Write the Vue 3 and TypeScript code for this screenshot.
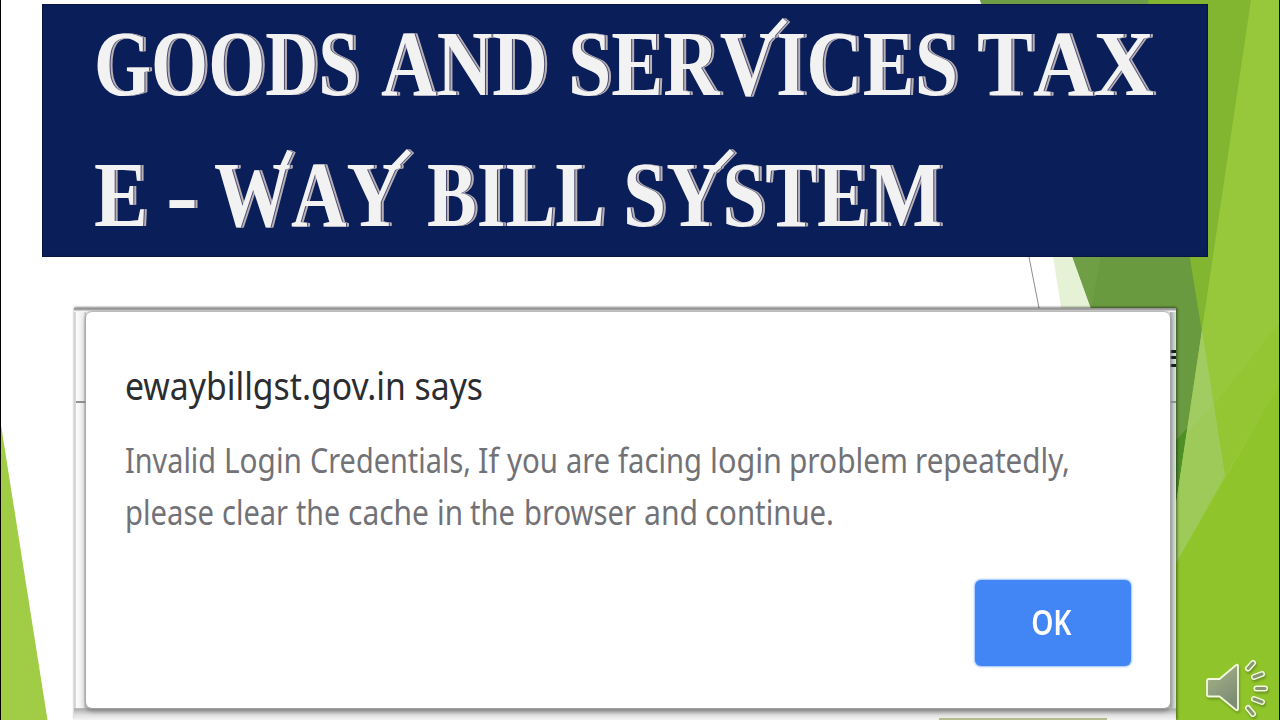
<script setup lang="ts">
interface Word {
  text: string
  x: number
  width: number
}

interface Line {
  baseline: number
  words: Word[]
}

const banner: Line[] = [
  {
    baseline: 91,
    words: [
      { text: 'GOODS', x: 52, width: 265 },
      { text: 'AND', x: 339, width: 167 },
      { text: 'SERVICES', x: 526, width: 390 },
      { text: 'TAX', x: 935, width: 177 },
    ],
  },
  {
    baseline: 222,
    words: [
      { text: 'E', x: 52, width: 54 },
      { text: '-', x: 124, width: 32 },
      { text: 'WAY', x: 172, width: 188 },
      { text: 'BILL', x: 385, width: 178 },
      { text: 'SYSTEM', x: 581, width: 319 },
    ],
  },
]

const swashes = ['M725 36 L743 16', 'M239 167 L248 147', 'M348 167 L367 147', 'M671 167 L690 147']

const message: Line[] = [
  {
    baseline: 36,
    words: [
      { text: 'Invalid', x: 0, width: 91 },
      { text: 'Login', x: 99, width: 78 },
      { text: 'Credentials,', x: 185, width: 161 },
      { text: 'If', x: 353, width: 21 },
      { text: 'you', x: 382, width: 51 },
      { text: 'are', x: 441, width: 44 },
      { text: 'facing', x: 493, width: 84 },
      { text: 'login', x: 585, width: 72 },
      { text: 'problem', x: 664, width: 119 },
      { text: 'repeatedly,', x: 790, width: 155 },
    ],
  },
  {
    baseline: 88,
    words: [
      { text: 'please', x: 0, width: 89 },
      { text: 'clear', x: 97, width: 66 },
      { text: 'the', x: 171, width: 44 },
      { text: 'cache', x: 223, width: 81 },
      { text: 'in', x: 312, width: 26 },
      { text: 'the', x: 345, width: 45 },
      { text: 'browser', x: 399, width: 112 },
      { text: 'and', x: 519, width: 54 },
      { text: 'continue.', x: 580, width: 129 },
    ],
  },
]
</script>

<template>
  <main class="slide">
    <svg class="backdrop" viewBox="0 0 1280 720" aria-hidden="true">
      <polygon points="1,425 47.5,720 1,720" fill="#a0cc46" />
      <path d="M1029 257 L1039 308" stroke="#8c8c8c" stroke-width="1" fill="none" />
      <polygon points="1012,0 1280,0 1280,720 1127,720" fill="#e6f2d5" />
      <polygon points="980,0 1280,0 1280,720 1239,720" fill="#6a9a40" />
      <polygon points="980,0 1150,0 1091,308" fill="#6f9e46" />
      <polygon points="1175,441 1200,415 1200,520 1175,520" fill="#4f8f27" />
      <polygon points="1148,0 1280,0 1280,720 1265,720" fill="#82b530" />
      <polygon points="1251,0 1280,0 1280,720 1144,720" fill="#97c83b" />
      <polygon points="1202,330 1225,475 1175,565 1175,511" fill="#a1cc62" />
      <polygon points="1187,433 1213,405 1225,475 1175,565 1175,511" fill="#9dca59" />
      <polygon points="1280,322 1214,405 1225,475 1280,385" fill="#93c632" />
      <polygon points="1280,384 1175,565 1175,720 1280,720" fill="#8fc42a" />
      <rect width="1" height="720" fill="#000" />
      <rect x="1279" width="1" height="720" fill="#071006" />
    </svg>

    <header class="banner">
      <svg class="banner-text" viewBox="0 0 1166 253" role="heading">
        <path v-for="d in swashes" :key="d" :d="d" class="swash" />
        <text v-for="line in banner" :key="line.baseline" :y="line.baseline">
          <tspan
            v-for="word in line.words"
            :key="word.x"
            :x="word.x"
            :textLength="word.width"
            lengthAdjust="spacingAndGlyphs"
          >{{ word.text }}</tspan>
        </text>
      </svg>
    </header>

    <section class="frame">
      <div class="gutter"></div>
      <div class="dialog">
        <svg class="origin" viewBox="0 0 1000 56">
          <text x="0" y="44" textLength="358" lengthAdjust="spacingAndGlyphs">ewaybillgst.gov.in says</text>
        </svg>
        <svg class="message" viewBox="0 0 1000 110">
          <text v-for="line in message" :key="line.baseline" :y="line.baseline">
            <tspan
              v-for="word in line.words"
              :key="word.x"
              :x="word.x"
              :textLength="word.width"
              lengthAdjust="spacingAndGlyphs"
            >{{ word.text }}</tspan>
          </text>
        </svg>
        <button class="ok" type="button"><span>OK</span></button>
      </div>
      <div class="gutter right">
        <i class="bar"></i>
        <i class="bar"></i>
        <i class="bar last"></i>
      </div>
    </section>

    <svg class="speaker" viewBox="0 0 66 64" aria-label="Sound">
      <defs>
        <linearGradient id="cone" x1="0" y1="0" x2="0.5" y2="1">
          <stop offset="0" stop-color="#aab68b" />
          <stop offset="1" stop-color="#7c8c73" />
        </linearGradient>
      </defs>
      <path d="M5 22 H15.500 L31.500 8.500 Q34 6.500 34 9 V52 Q34 54.500 31.500 52.500 L15.500 39.500 H5 Q3 39.500 3 37.500 V24 Q3 22 5 22 Z" fill="url(#cone)" stroke="#f3fadf" stroke-width="1.800" />
      <g class="waves outline">
        <path d="M44 11.500 L49 6" />
        <path d="M50 20 L58 17" />
        <path d="M52.500 31.500 H61" />
        <path d="M50 42 L58 45" />
        <path d="M44 51 L49 57" />
      </g>
      <g class="waves core">
        <path d="M44 11.500 L49 6" />
        <path d="M50 20 L58 17" />
        <path d="M52.500 31.500 H61" />
        <path d="M50 42 L58 45" />
        <path d="M44 51 L49 57" />
      </g>
    </svg>
  </main>
</template>

<style>
body {
  margin: 0;
  overflow: hidden;
}
</style>

<style scoped>
.slide {
  position: relative;
  box-sizing: border-box;
  width: 1280px;
  height: 720px;
  padding: 4px 72px 0 42px;
  overflow: hidden;
  background: #fff;
  font-family: "Noto Sans", "Open Sans", sans-serif;
}

.backdrop {
  position: absolute;
  inset: 0;
  width: 1280px;
  height: 720px;
}

.banner {
  position: relative;
  height: 253px;
  background: #0a1e5a;
  box-shadow: inset 0 0 1px 1px #081340;
}

.banner-text {
  display: block;
  width: 1166px;
  height: 253px;
  overflow: visible;
  font-family: "Liberation Serif", serif;
  font-size: 94px;
  font-weight: 700;
  font-kerning: none;
  fill: #f3f2f2;
  filter: drop-shadow(1px 0 0 #4a4c70) drop-shadow(2px 0 0 #b9b0b5);
}

.swash {
  fill: none;
  stroke: #f3f2f2;
  stroke-width: 6;
}

.frame {
  position: relative;
  display: flex;
  box-sizing: border-box;
  width: 1102px;
  height: 412px;
  margin: 51px 0 0 32px;
  padding-top: 4px;
  background: linear-gradient(#8f8f8f 0, #a8a8a8 2px, #f4f4f4 3px, #fafafa 12px, #fafafa 398px, #adadad 401px, #e1e1e1 407px, #f4f4f4 412px);
  box-shadow: 0 -1px 2px rgba(0, 0, 0, 0.4), 2px 0 2px rgba(0, 0, 0, 0.25);
}

.frame::after {
  content: "";
  position: absolute;
  right: 69px;
  bottom: 0;
  width: 168px;
  height: 2px;
  background: #b6bd8d;
}

.gutter {
  box-sizing: border-box;
  width: 12px;
  height: 396px;
  border-left: 2px solid #d5d5d5;
  background: linear-gradient(transparent 89px, #929292 89px, #929292 91px, transparent 91px), linear-gradient(90deg, #fdfdfd, #ececec 75%, #bdbdbd);
}

.gutter.right {
  display: flex;
  flex-direction: column;
  gap: 3px;
  width: 6px;
  padding-top: 38px;
  border: 0;
  background: linear-gradient(transparent 89px, #8d9790 89px, #8d9790 91px, transparent 91px), linear-gradient(90deg, #a9adab, #dce5dd);
}

.bar {
  width: 6px;
  height: 3px;
  background: #17201b;
}

.bar.last {
  margin-top: 2px;
}

.dialog {
  position: relative;
  display: flex;
  flex-direction: column;
  box-sizing: border-box;
  width: 1084px;
  height: 396px;
  padding: 44px 39px 42px 39px;
  border-radius: 6px;
  background: #fff;
  box-shadow: 0 0 2px 1px #aaa, 0 3px 5px rgba(0, 0, 0, 0.35);
}

.origin {
  display: block;
  width: 1000px;
  height: 56px;
  font-size: 38px;
  fill: #2b2d31;
}

.message {
  display: block;
  width: 1000px;
  height: 110px;
  margin-top: 25px;
  font-size: 35px;
  fill: #727276;
}

.ok {
  display: grid;
  place-items: center;
  width: 156px;
  height: 86px;
  margin: auto 0 0 auto;
  padding: 0 3px 3px 0;
  border: 0;
  border-radius: 6px;
  background: #4285f4;
  box-shadow: 0 0 2px 1px #9ac2ff;
  color: #fff;
  font: 600 34px "Noto Sans", sans-serif;
}

.ok span {
  transform: scaleX(0.83);
}

.speaker {
  position: absolute;
  left: 1204px;
  top: 657px;
  width: 66px;
  height: 64px;
  filter: drop-shadow(1px 2px 1px rgba(55, 85, 20, 0.4));
}

.waves {
  fill: none;
  stroke-linecap: round;
}

.outline {
  stroke: #f3fadf;
  stroke-width: 6;
}

.core {
  stroke: #87976d;
  stroke-width: 3;
}
</style>
